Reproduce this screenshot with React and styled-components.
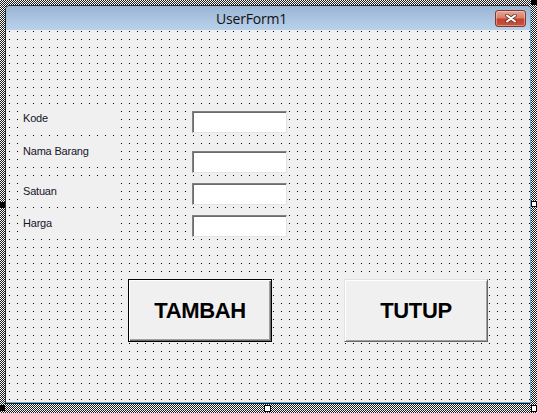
import React from "react";
import styled, { createGlobalStyle } from "styled-components";

const GlobalStyle = createGlobalStyle`
  html, body {
    margin: 0;
    padding: 0;
    background: #ffffff;
  }
  body {
    font-family: "Liberation Sans", Arial, sans-serif;
  }
`;

const fields = [
  { label: "Kode", offset: 1 },
  { label: "Nama Barang", offset: 8 },
  { label: "Satuan", offset: 0 },
  { label: "Harga", offset: 0 },
];

const handles = [
  { x: 531, y: 0, w: 6, h: 5, dark: true },
  { x: 0, y: 202, w: 5, h: 6, dark: true },
  { x: 0, y: 405, w: 5, h: 6, dark: true },
  { x: 531, y: 201, w: 6, h: 6 },
  { x: 264, y: 405, w: 7, h: 7 },
  { x: 531, y: 405, w: 6, h: 7 },
];

const App = () => {
  return (
    <>
      <GlobalStyle />
      <Designer>
        <Window>
          <TitleBar>
            <Title>UserForm1</Title>
            <CloseButton aria-label="close">
              <svg width="12" height="9" viewBox="0 0 12 9">
                <path
                  d="M2 1.5 L10 7.5 M10 1.5 L2 7.5"
                  stroke="#6b3a33"
                  strokeWidth="3.6"
                  strokeLinecap="round"
                />
                <path
                  d="M2 1.5 L10 7.5 M10 1.5 L2 7.5"
                  stroke="#ffffff"
                  strokeWidth="2"
                  strokeLinecap="round"
                />
              </svg>
            </CloseButton>
          </TitleBar>
          <FormBody>
            <Fields>
              {fields.map((f) => (
                <FieldRow key={f.label}>
                  <Label>{f.label}</Label>
                  <TextBox $offset={f.offset} />
                </FieldRow>
              ))}
            </Fields>
            <ButtonRow>
              <CommandButton $default>TAMBAH</CommandButton>
              <CommandButton>TUTUP</CommandButton>
            </ButtonRow>
          </FormBody>
        </Window>
        {handles.map((h, i) => (
          <Handle
            key={i}
            $dark={h.dark}
            style={{ left: h.x, top: h.y, width: h.w, height: h.h }}
          />
        ))}
      </Designer>
    </>
  );
};

export default App;

const Designer = styled.div`
  position: relative;
  width: 537px;
  height: 413px;
  box-sizing: border-box;
  padding: 5px 6px 9px 5px;
  background: repeating-conic-gradient(#1a1a1a 0 25%, #ffffff 0 50%) 0 0 /
    2px 2px;
  overflow: hidden;
`;

const Window = styled.div`
  width: 526px;
  height: 399px;
  box-sizing: border-box;
  display: flex;
  flex-direction: column;
  border-left: 1px solid #2c2c2c;
  border-top: 1px solid #2c2c2c;
  border-right: 1px solid #56aee4;
  border-bottom: 1px solid #1e1e1e;
  border-radius: 5px 5px 0 0;
  background: #f0f0f0;
  overflow: hidden;
`;

const TitleBar = styled.div`
  height: 24px;
  flex: none;
  display: flex;
  align-items: center;
  padding-right: 4px;
  background: linear-gradient(to bottom, #9ab5d3 0%, #a9c3e0 50%, #bad2eb 100%);
`;

const Title = styled.div`
  flex: 1;
  text-align: center;
  font-family: "Open Sans", "Liberation Sans", sans-serif;
  font-size: 14px;
  letter-spacing: -0.2px;
  color: #101010;
  padding-left: 2px;
`;

const CloseButton = styled.div`
  width: 31px;
  height: 17px;
  box-sizing: border-box;
  border: 1px solid #7d3b30;
  border-radius: 3px;
  display: flex;
  align-items: center;
  justify-content: center;
  background: linear-gradient(
    to bottom,
    #e7a698 0%,
    #d97f6b 45%,
    #c4422d 55%,
    #c9543a 100%
  );
  box-shadow: inset 0 0 0 1px rgba(255, 220, 210, 0.45);
`;

const FormBody = styled.div`
  flex: 1;
  display: flex;
  flex-direction: column;
  border-bottom: 1px solid #56aee4;
  background-color: #000000;
  background-image: linear-gradient(to right, transparent 1px, #f0f0f0 1px),
    linear-gradient(to bottom, transparent 1px, #f0f0f0 1px);
  background-size: 8px 8px;
  background-position: 3px 1px;
`;

const Fields = styled.div`
  display: flex;
  flex-direction: column;
  gap: 10px;
  margin: 80px 0 0 12px;
`;

const FieldRow = styled.div`
  display: flex;
  align-items: flex-start;
`;

const Label = styled.div`
  width: 100px;
  height: 22px;
  box-sizing: border-box;
  padding: 2px 0 0 5px;
  background: #f0f0f0;
  font-family: "Liberation Sans", Tahoma, sans-serif;
  font-size: 11px;
  letter-spacing: -0.2px;
  line-height: 13px;
  color: #14142a;
`;

const TextBox = styled.div`
  width: 95px;
  height: 22px;
  box-sizing: border-box;
  margin: ${(p) => p.$offset}px 0 0 74px;
  background: #ffffff;
  border: 1px solid;
  border-color: #828282 #e3e3e3 #e3e3e3 #828282;
  box-shadow: inset 1px 1px 0 #6a6a6a;
`;

const ButtonRow = styled.div`
  display: flex;
  gap: 72px;
  margin: 42px 0 0 122px;
`;

const CommandButton = styled.div`
  width: 144px;
  height: 63px;
  box-sizing: border-box;
  display: flex;
  align-items: center;
  justify-content: center;
  padding-top: 1px;
  background: #f0f0f0;
  font-family: "Liberation Sans", Arial, sans-serif;
  font-weight: 700;
  font-size: 22px;
  letter-spacing: -0.4px;
  color: #000000;
  border: 1px solid;
  border-color: ${(p) =>
    p.$default ? "#000000" : "#e3e3e3 #696969 #696969 #e3e3e3"};
  box-shadow: ${(p) =>
    p.$default
      ? "inset 1px 1px 0 #ffffff, inset -1px -1px 0 #696969, inset -2px -2px 0 #a0a0a0"
      : "inset 1px 1px 0 #ffffff, inset -1px -1px 0 #a0a0a0"};
`;

const Handle = styled.div`
  position: absolute;
  box-sizing: border-box;
  background: ${(p) => (p.$dark ? "#000000" : "#ffffff")};
  border: 1px solid #000000;
`;
